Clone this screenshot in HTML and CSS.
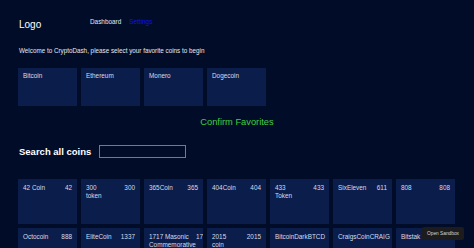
FILE: index.html
```html
<!DOCTYPE html>
<html lang="en">
<head>
  <meta charset="UTF-8" />
  <meta name="viewport" content="width=device-width, initial-scale=1.0" />
  <title>CryptoDash</title>
  <link rel="stylesheet" href="styles.css">
</head>
<body>
  <div class="app">
    <header>
      <div class="logo">Logo</div>
      <nav>
        <a class="nav-link">Dashboard</a>
        <a class="nav-link active" href="#">Settings</a>
      </nav>
    </header>

    <p class="welcome">Welcome to CryptoDash, please select your favorite coins to begin</p>

    <div class="favorites">
      <div class="fav-card">Bitcoin</div>
      <div class="fav-card">Ethereum</div>
      <div class="fav-card">Monero</div>
      <div class="fav-card">Dogecoin</div>
    </div>

    <div class="confirm">Confirm Favorites</div>

    <div class="search">
      <h2>Search all coins</h2>
      <input type="text">
    </div>

    <div class="coin-grid">
      <div class="coin-card"><span>42 Coin</span><span class="sym">42</span></div>
      <div class="coin-card"><span>300 token</span><span class="sym">300</span></div>
      <div class="coin-card"><span>365Coin</span><span class="sym">365</span></div>
      <div class="coin-card"><span>404Coin</span><span class="sym">404</span></div>
      <div class="coin-card"><span>433 Token</span><span class="sym">433</span></div>
      <div class="coin-card"><span>SixEleven</span><span class="sym">611</span></div>
      <div class="coin-card"><span>808</span><span class="sym">808</span></div>
      <div class="coin-card"><span>Octocoin</span><span class="sym">888</span></div>
      <div class="coin-card"><span>EliteCoin</span><span class="sym">1337</span></div>
      <div class="coin-card"><span>1717 Masonic Commemorative</span><span class="sym">1717</span></div>
      <div class="coin-card"><span>2015 coin</span><span class="sym">2015</span></div>
      <div class="coin-card"><span>BitcoinDark</span><span class="sym">BTCD</span></div>
      <div class="coin-card"><span>CraigsCoin</span><span class="sym">CRAIG</span></div>
      <div class="coin-card"><span>Bitstak</span><span class="sym">XBS</span></div>
    </div>
  </div>

  <div class="sandbox-tip">Open Sandbox</div>
</body>
</html>
```

FILE: styles.css
```css
:root {
  --bg: #010c29;
  --card: #0b1d4b;
  --text: #d6dcec;
  --green: #41cf3f;
}

* {
  margin: 0;
  padding: 0;
  box-sizing: border-box;
}

html, body {
  overflow: hidden;
}

body {
  font-family: 'Liberation Sans', Arial, sans-serif;
  background-color: var(--bg);
  color: var(--text);
  height: 100vh;
}

.app {
  padding: 18px 17px 0 18px;
}

header {
  display: flex;
  align-items: flex-start;
}

.logo {
  width: 72px;
  font-size: 10px;
  line-height: 14px;
  padding-left: 1px;
  color: #ffffff;
}

nav {
  display: flex;
  gap: 8px;
}

.nav-link {
  font-size: 6.4px;
  line-height: 8px;
  color: #e6e9f2;
  text-decoration: none;
}

.nav-link.active {
  color: #1010ee;
}

.welcome {
  margin-top: 14px;
  padding-left: 1px;
  font-size: 6.3px;
  line-height: 9px;
  color: #e6e9f2;
}

.favorites {
  display: flex;
  gap: 4px;
  margin-top: 13px;
}

.fav-card {
  width: 59px;
  height: 38px;
  padding: 4px 5px;
  background-color: var(--card);
  font-size: 6.4px;
  line-height: 8px;
}

.confirm {
  margin-top: 10px;
  text-align: center;
  font-size: 9.3px;
  line-height: 12px;
  color: var(--green);
  margin-right: -17px;
  margin-left: -18px;
}

.search {
  display: flex;
  align-items: center;
  gap: 8px;
  margin-top: 17px;
  padding-left: 1px;
}

.search h2 {
  font-size: 9.5px;
  line-height: 12px;
  color: #ffffff;
}

.search input {
  width: 87px;
  height: 13px;
  background: transparent;
  border: 1px solid #737a8c;
}

.coin-grid {
  display: grid;
  grid-template-columns: repeat(7, 59px);
  gap: 4px;
  margin-top: 21px;
}

.coin-card {
  height: 45px;
  padding: 5px;
  background-color: var(--card);
  overflow: hidden;
  display: grid;
  grid-template-columns: 1fr 1fr;
  align-content: start;
  font-size: 6.4px;
  line-height: 7.5px;
}

.coin-card .sym {
  justify-self: end;
}

.sandbox-tip {
  position: fixed;
  right: 10px;
  bottom: 8px;
  width: 42px;
  height: 13px;
  border-radius: 2px;
  background-color: #1c1c1e;
  color: #d8d8d8;
  font-size: 4.8px;
  line-height: 13px;
  text-align: center;
}
```
